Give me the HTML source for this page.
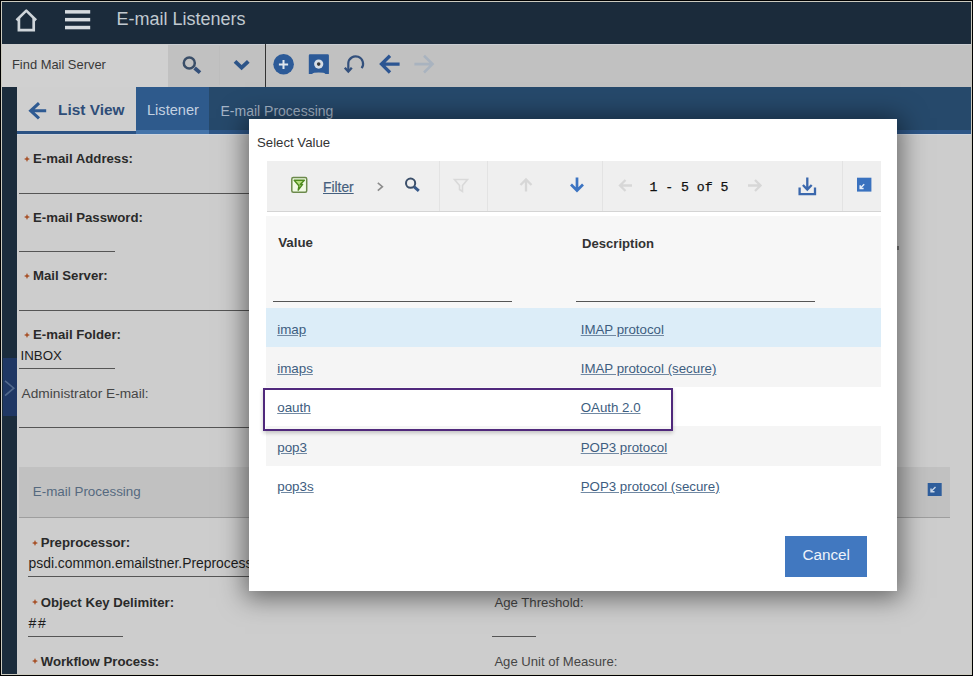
<!DOCTYPE html>
<html><head><meta charset="utf-8">
<style>
*{box-sizing:border-box;margin:0;padding:0}
html,body{width:973px;height:676px;overflow:hidden;background:#000}
body{position:relative;font-family:"Liberation Sans",sans-serif}
.a{position:absolute}
.t{position:absolute;white-space:nowrap;line-height:1}
</style></head>
<body>
<div class="a" style="left:1px;top:1px;width:971px;height:674px;background:#cbcabf;"></div>
<div class="a" style="left:2px;top:2px;width:969px;height:672px;background:#cdcdcd;"></div>
<div class="a" style="left:2px;top:2px;width:969px;height:42px;background:#1b2b3b;"></div>
<svg class="a" style="left:0;top:0" width="100" height="44" viewBox="0 0 100 44">
<path d="M16.5 20.2 L26.3 10.6 L36.1 20.2" fill="none" stroke="#cfd5da" stroke-width="2.6" stroke-linejoin="round"/>
<path d="M18.9 18.2 V30.2 H33.7 V18.2" fill="none" stroke="#cfd5da" stroke-width="2.7"/>
<rect x="65" y="10.1" width="25.2" height="3.5" fill="#d6dbdf"/>
<rect x="65" y="17.9" width="25.2" height="3.5" fill="#d6dbdf"/>
<rect x="65" y="25.8" width="25.2" height="3.5" fill="#d6dbdf"/>
</svg>
<div class="t" style="left:116.5px;top:9.76px;font-size:18px;color:#c1c9d0;">E-mail Listeners</div>
<div class="a" style="left:2px;top:44px;width:969px;height:43px;background:#c1c1c1;"></div>
<div class="a" style="left:2px;top:44px;width:969px;height:1px;background:#cbced2;"></div>
<div class="a" style="left:2px;top:44px;width:166px;height:43px;background:#d0d0d0;"></div>
<div class="t" style="left:12px;top:58.88px;font-size:12.9px;color:#383838;">Find Mail Server</div>
<div class="a" style="left:219px;top:46px;width:1px;height:39px;background:#bdbdbd;"></div>
<div class="a" style="left:265px;top:44px;width:1px;height:43px;background:#333;"></div>
<svg class="a" style="left:160px;top:44px" width="290" height="43" viewBox="160 44 290 43">
<circle cx="189.3" cy="62.9" r="5.5" fill="none" stroke="#3a4e68" stroke-width="2.5"/>
<path d="M194.6 68 L200 72.6" stroke="#34507a" stroke-width="3.8"/>
<path d="M235 61.3 L241.6 67.7 L248.3 61.3" fill="none" stroke="#2c5488" stroke-width="3.8"/>
<circle cx="283.6" cy="64.3" r="10.3" fill="#2c5a98"/>
<path d="M283.5 59.9 V69 M278.9 64.4 H288.1" stroke="#dfe6ee" stroke-width="2.0"/>
<path d="M308.8 55.5 Q308.8 54.3 310 54.3 H327.7 Q328.9 54.3 328.9 55.5 V74 H325.5 Q324.5 72.6 318.8 72.6 Q313.1 72.6 312.1 74 H308.8 Z" fill="#2c5a98"/>
<circle cx="318.7" cy="64.1" r="4.6" fill="#d6dde6"/>
<circle cx="318.7" cy="64.1" r="1.8" fill="#3a3a3a"/>
<path d="M361.6 68.2 A7.4 7.4 0 1 0 348.3 63.2 V70.5" fill="none" stroke="#33507c" stroke-width="2.2"/>
<path d="M344.8 67.8 L348.3 71.5 L351.8 67.8" fill="none" stroke="#33507c" stroke-width="2.4"/>
<path d="M390 55.8 L381.5 64.1 L390 72.5 M382 64.1 H399.6" fill="none" stroke="#2c5592" stroke-width="3.3"/>
<path d="M424 55.8 L432.5 64.1 L424 72.5 M432 64.1 H414.4" fill="none" stroke="#a9b3bf" stroke-width="2.6"/>
</svg>
<div class="a" style="left:2px;top:87px;width:969px;height:47px;background:#26496b;"></div>
<div class="a" style="left:2px;top:130px;width:969px;height:4px;background:#2e5788;"></div>
<div class="a" style="left:2px;top:134px;width:969px;height:1px;background:#cfd5dd;"></div>
<div class="a" style="left:17px;top:87px;width:119px;height:44px;background:#cfcfcf;"></div>
<div class="a" style="left:17px;top:131px;width:119px;height:3px;background:#2b5283;"></div>
<div class="a" style="left:136px;top:87px;width:73px;height:44px;background:#2e5a8c;"></div>
<div class="a" style="left:136px;top:130px;width:73px;height:4px;background:#4474aa;"></div>
<svg class="a" style="left:20px;top:96px" width="32" height="30" viewBox="20 96 32 30">
<path d="M39 103.2 L30.7 110.8 L39 118.3 M31.2 110.8 H46.2" fill="none" stroke="#2e5a92" stroke-width="3.1"/>
</svg>
<div class="t" style="left:58px;top:101.76px;font-size:15.4px;font-weight:bold;color:#2e4d78;">List View</div>
<div class="t" style="left:147px;top:103.34px;font-size:14.6px;color:#c3d1e1;">Listener</div>
<div class="t" style="left:220.5px;top:103.85px;font-size:14.0px;color:#a5b5c8;">E-mail Processing</div>
<div class="a" style="left:2px;top:87px;width:15px;height:587px;background:#1b2c3c;"></div>
<div class="a" style="left:3px;top:358px;width:14px;height:58px;background:#1f3764;"></div>
<svg class="a" style="left:0px;top:375px" width="18" height="26" viewBox="0 375 18 26">
<path d="M5 380.8 L13.8 388.2 L5 395.6" fill="none" stroke="#52698c" stroke-width="1.6"/>
</svg>
<svg class="a" style="left:22.6px;top:154.6px" width="8" height="8" viewBox="-4 -4 8 8"><path d="M0 -3 L0.9 -0.9 L3 0 L0.9 0.9 L0 3 L-0.9 0.9 L-3 0 L-0.9 -0.9 Z" fill="#a8532a"/></svg>
<div class="t" style="left:33px;top:151.93px;font-size:13.2px;font-weight:bold;color:#2a2a2a;">E-mail Address:</div>
<div class="a" style="left:19px;top:193px;width:240px;height:1px;background:#555;"></div>
<svg class="a" style="left:22.6px;top:213.4px" width="8" height="8" viewBox="-4 -4 8 8"><path d="M0 -3 L0.9 -0.9 L3 0 L0.9 0.9 L0 3 L-0.9 0.9 L-3 0 L-0.9 -0.9 Z" fill="#a8532a"/></svg>
<div class="t" style="left:33px;top:210.53px;font-size:13.2px;font-weight:bold;color:#2a2a2a;">E-mail Password:</div>
<div class="a" style="left:19px;top:251px;width:96px;height:1px;background:#555;"></div>
<svg class="a" style="left:22.6px;top:272.1px" width="8" height="8" viewBox="-4 -4 8 8"><path d="M0 -3 L0.9 -0.9 L3 0 L0.9 0.9 L0 3 L-0.9 0.9 L-3 0 L-0.9 -0.9 Z" fill="#a8532a"/></svg>
<div class="t" style="left:33px;top:269.23px;font-size:13.2px;font-weight:bold;color:#2a2a2a;">Mail Server:</div>
<div class="a" style="left:19px;top:310px;width:240px;height:1px;background:#555;"></div>
<svg class="a" style="left:22.6px;top:330.5px" width="8" height="8" viewBox="-4 -4 8 8"><path d="M0 -3 L0.9 -0.9 L3 0 L0.9 0.9 L0 3 L-0.9 0.9 L-3 0 L-0.9 -0.9 Z" fill="#a8532a"/></svg>
<div class="t" style="left:33px;top:327.63px;font-size:13.2px;font-weight:bold;color:#2a2a2a;">E-mail Folder:</div>
<div class="t" style="left:20.5px;top:349.24px;font-size:13.3px;color:#1c1c1c;">INBOX</div>
<div class="a" style="left:19px;top:368px;width:96px;height:1px;background:#555;"></div>
<div class="t" style="left:21.6px;top:387.10px;font-size:13.7px;color:#454545;">Administrator E-mail:</div>
<div class="a" style="left:19px;top:427px;width:240px;height:1px;background:#555;"></div>
<div class="a" style="left:19px;top:467px;width:931px;height:50px;background:#c1c1c1;"></div>
<div class="a" style="left:19px;top:517px;width:931px;height:1px;background:#9e9e9e;"></div>
<div class="t" style="left:32.8px;top:485.26px;font-size:13.4px;color:#55697f;">E-mail Processing</div>
<svg class="a" style="left:926px;top:481px" width="18" height="18" viewBox="926 481 18 18">
<rect x="927.7" y="483" width="14" height="13" fill="#2f5e9c"/>
<path d="M935.5 487 L931 491.5 M931 488.5 V491.8 H934.5" fill="none" stroke="#c8d6e8" stroke-width="1.4"/>
</svg>
<svg class="a" style="left:30.8px;top:538.9px" width="8" height="8" viewBox="-4 -4 8 8"><path d="M0 -3 L0.9 -0.9 L3 0 L0.9 0.9 L0 3 L-0.9 0.9 L-3 0 L-0.9 -0.9 Z" fill="#a8532a"/></svg>
<div class="t" style="left:40.7px;top:536.33px;font-size:13.2px;font-weight:bold;color:#2a2a2a;">Preprocessor:</div>
<div class="t" style="left:28.5px;top:556.53px;font-size:13.9px;color:#1c1c1c;">psdi.common.emailstner.Preprocessor</div>
<div class="a" style="left:28px;top:576px;width:240px;height:1px;background:#555;"></div>
<svg class="a" style="left:30.8px;top:598.4px" width="8" height="8" viewBox="-4 -4 8 8"><path d="M0 -3 L0.9 -0.9 L3 0 L0.9 0.9 L0 3 L-0.9 0.9 L-3 0 L-0.9 -0.9 Z" fill="#a8532a"/></svg>
<div class="t" style="left:40.7px;top:595.93px;font-size:13.2px;font-weight:bold;color:#2a2a2a;">Object Key Delimiter:</div>
<div class="t" style="left:28.5px;top:616.45px;font-size:14px;color:#1c1c1c;letter-spacing:1.6px;">##</div>
<div class="a" style="left:28px;top:636px;width:95px;height:1px;background:#555;"></div>
<svg class="a" style="left:30.8px;top:657.4px" width="8" height="8" viewBox="-4 -4 8 8"><path d="M0 -3 L0.9 -0.9 L3 0 L0.9 0.9 L0 3 L-0.9 0.9 L-3 0 L-0.9 -0.9 Z" fill="#a8532a"/></svg>
<div class="t" style="left:40.7px;top:654.83px;font-size:13.2px;font-weight:bold;color:#2a2a2a;">Workflow Process:</div>
<div class="t" style="left:494.4px;top:596.23px;font-size:13.2px;color:#454545;">Age Threshold:</div>
<div class="a" style="left:492px;top:636px;width:44px;height:1px;background:#555;"></div>
<div class="t" style="left:494.4px;top:655.11px;font-size:13.1px;color:#454545;">Age Unit of Measure:</div>
<div class="a" style="left:249px;top:119px;width:648px;height:472px;background:#fff;box-shadow:0 3px 24px 4px rgba(0,0,0,0.5);"></div>
<div class="t" style="left:257px;top:135.63px;font-size:13.2px;color:#333;">Select Value</div>
<div class="a" style="left:267px;top:161px;width:614px;height:51px;background:#efefef;"></div>
<div class="a" style="left:267px;top:211px;width:614px;height:1px;background:#d4d4d4;"></div>
<div class="a" style="left:439px;top:161px;width:1px;height:50px;background:#e3e3e3;"></div>
<div class="a" style="left:487px;top:161px;width:1px;height:50px;background:#e3e3e3;"></div>
<div class="a" style="left:602px;top:161px;width:1px;height:50px;background:#e3e3e3;"></div>
<div class="a" style="left:842px;top:161px;width:1px;height:50px;background:#e3e3e3;"></div>
<svg class="a" style="left:267px;top:161px" width="614" height="51" viewBox="267 161 614 51">
<rect x="291.8" y="177.6" width="14.9" height="14.6" rx="1.5" fill="#f1fae4" stroke="#6c8a4c" stroke-width="1.5"/>
<path d="M294.2 180.3 H304.4 L300.2 184.6 L302.6 184.4 L298.2 190.2 L298.9 185.8 Z" fill="#b6e07e" stroke="#4e8a1e" stroke-width="1.4" stroke-linejoin="round"/>
<path d="M377.8 182.8 L382.4 186.7 L377.8 190.6" fill="none" stroke="#8c8c8c" stroke-width="1.6"/>
<circle cx="410.6" cy="183.2" r="4.6" fill="none" stroke="#3b4f6a" stroke-width="2"/>
<path d="M414.2 186.8 L418.8 190.8" stroke="#37598a" stroke-width="3"/>
<path d="M454.5 179.5 H467.5 L462.5 185.5 V191.5 L459.5 189.5 V185.5 Z" fill="none" stroke="#d9d9d9" stroke-width="1.6"/>
<path d="M526 191.6 V180 M520.5 185 L526 179.5 L531.5 185" fill="none" stroke="#d7d7d7" stroke-width="2.3"/>
<path d="M577 177.6 V190 M571 184.5 L577 190.5 L583 184.5" fill="none" stroke="#3c74c2" stroke-width="2.7"/>
<path d="M632 185.5 H620.5 M625.5 180 L620 185.5 L625.5 191" fill="none" stroke="#d7d7d7" stroke-width="2.3"/>
<path d="M748 185.5 H760 M755 180 L760.5 185.5 L755 191" fill="none" stroke="#d7d7d7" stroke-width="2.3"/>
<path d="M807.3 177.5 V189.5 M802.9 185 L807.3 189.6 L811.7 185" fill="none" stroke="#3b68ad" stroke-width="2.3"/>
<path d="M799.6 187.6 V194.2 H815 V187.6" fill="none" stroke="#3b68ad" stroke-width="2.3"/>
<rect x="857" y="177.7" width="14.4" height="13.9" fill="#3a72bf"/>
<path d="M864.2 184.2 L860.2 188.2 M860.2 185.2 V188.6 H863.6" fill="none" stroke="#e6eef9" stroke-width="1.5"/>
</svg>
<div class="t" style="left:323px;top:180.82px;font-size:13.8px;color:#45607e;text-decoration:underline;-webkit-text-stroke:0.2px #45607e;">Filter</div>
<div class="t" style="left:649.4px;top:181.48px;font-size:13.2px;font-family:'Liberation Mono',monospace;color:#111;-webkit-text-stroke:0.25px #111;">1 - 5 of 5</div>
<div class="a" style="left:266px;top:216px;width:615px;height:92px;background:#f7f7f7;"></div>
<div class="t" style="left:278.2px;top:236.34px;font-size:13.3px;font-weight:bold;color:#333;">Value</div>
<div class="t" style="left:582px;top:236.51px;font-size:13.1px;font-weight:bold;color:#333;">Description</div>
<div class="a" style="left:273px;top:301px;width:239px;height:1px;background:#555;"></div>
<div class="a" style="left:576px;top:301px;width:239px;height:1px;background:#555;"></div>
<div class="a" style="left:266px;top:308px;width:615px;height:39px;background:#dcedf8;"></div>
<div class="a" style="left:266px;top:347px;width:615px;height:40px;background:#f5f5f5;"></div>
<div class="a" style="left:266px;top:426px;width:615px;height:40px;background:#f5f5f5;"></div>
<div class="t" style="left:277.2px;top:322.66px;font-size:13.4px;color:#3d5d80;text-decoration:underline;text-decoration-color:#7189a3;">imap</div>
<div class="t" style="left:580.7px;top:322.74px;font-size:13.3px;color:#3d5d80;text-decoration:underline;text-decoration-color:#7189a3;">IMAP protocol</div>
<div class="t" style="left:277.2px;top:361.96px;font-size:13.4px;color:#3d5d80;text-decoration:underline;text-decoration-color:#7189a3;">imaps</div>
<div class="t" style="left:580.7px;top:362.04px;font-size:13.3px;color:#3d5d80;text-decoration:underline;text-decoration-color:#7189a3;">IMAP protocol (secure)</div>
<div class="t" style="left:277.2px;top:401.26px;font-size:13.4px;color:#3d5d80;text-decoration:underline;text-decoration-color:#7189a3;">oauth</div>
<div class="t" style="left:580.7px;top:401.34px;font-size:13.3px;color:#3d5d80;text-decoration:underline;text-decoration-color:#7189a3;">OAuth 2.0</div>
<div class="t" style="left:277.2px;top:440.56px;font-size:13.4px;color:#3d5d80;text-decoration:underline;text-decoration-color:#7189a3;">pop3</div>
<div class="t" style="left:580.7px;top:440.64px;font-size:13.3px;color:#3d5d80;text-decoration:underline;text-decoration-color:#7189a3;">POP3 protocol</div>
<div class="t" style="left:277.2px;top:479.86px;font-size:13.4px;color:#3d5d80;text-decoration:underline;text-decoration-color:#7189a3;">pop3s</div>
<div class="t" style="left:580.7px;top:479.94px;font-size:13.3px;color:#3d5d80;text-decoration:underline;text-decoration-color:#7189a3;">POP3 protocol (secure)</div>
<div class="a" style="left:263px;top:388px;width:410px;height:43px;background:transparent;border:2.6px solid #50297c;box-shadow:0 2px 4px rgba(0,0,0,0.22);"></div>
<div class="a" style="left:897px;top:246px;width:2px;height:4px;background:#555;"></div>
<div class="a" style="left:785px;top:535.5px;width:82px;height:41.5px;background:#4178c0;"></div>
<div class="t" style="left:802.4px;top:546.85px;font-size:15.3px;color:#eef3fa;">Cancel</div>
</body></html>
